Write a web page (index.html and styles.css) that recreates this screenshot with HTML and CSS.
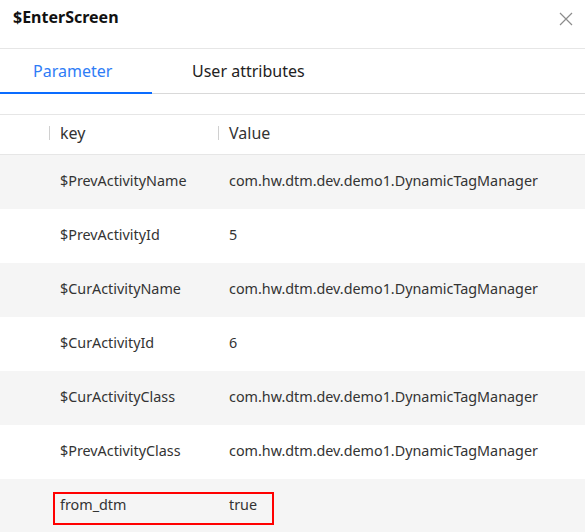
FILE: index.html
```html
<!DOCTYPE html>
<html>
<head>
<meta charset="utf-8">
<link rel="stylesheet" href="styles.css">
</head>
<body>
<div class="dialog">
  <div class="header">
    <span class="title">$EnterScreen</span>
    <svg class="close" width="14" height="14" viewBox="0 0 14 14"><path d="M1 1 L13 13 M13 1 L1 13" stroke="#8c8c8c" stroke-width="1.2" fill="none"/></svg>
  </div>
  <div class="tabs">
    <div class="tab active">Parameter</div>
    <div class="tab second">User attributes</div>
  </div>
  <div class="table">
    <div class="thead">
      <div class="cell key"><span class="sep"></span>key</div>
      <div class="cell val"><span class="sep"></span>Value</div>
    </div>
    <div class="row odd"><div class="cell key">$PrevActivityName</div><div class="cell val">com.hw.dtm.dev.demo1.DynamicTagManager</div></div>
    <div class="row"><div class="cell key">$PrevActivityId</div><div class="cell val">5</div></div>
    <div class="row odd"><div class="cell key">$CurActivityName</div><div class="cell val">com.hw.dtm.dev.demo1.DynamicTagManager</div></div>
    <div class="row"><div class="cell key">$CurActivityId</div><div class="cell val">6</div></div>
    <div class="row odd"><div class="cell key">$CurActivityClass</div><div class="cell val">com.hw.dtm.dev.demo1.DynamicTagManager</div></div>
    <div class="row"><div class="cell key">$PrevActivityClass</div><div class="cell val">com.hw.dtm.dev.demo1.DynamicTagManager</div></div>
    <div class="row odd last"><div class="cell key">from_dtm</div><div class="cell val">true</div><div class="highlight"></div></div>
  </div>
</div>
</body>
</html>
```

FILE: styles.css
```css
* { box-sizing: border-box; }
html, body { margin: 0; padding: 0; background: #fff; }
body {
  font-family: "Noto Sans", "Open Sans", sans-serif;
  color: #333;
  width: 587px;
  height: 532px;
  overflow: hidden;
}
.dialog { width: 585px; }
.header {
  height: 49px;
  border-bottom: 1px solid #e6e6e6;
  display: flex;
  align-items: flex-start;
  justify-content: space-between;
  padding: 5px 12px 0 13px;
}
.title {
  font-size: 16px;
  font-weight: bold;
  color: #111;
  line-height: 24px;
}
.close { margin-top: 7px; }
.tabs {
  height: 45px;
  display: flex;
  border-bottom: 1px solid #d9d9d9;
}
.tab {
  font-size: 16px;
  line-height: 44px;
  color: #222;
  height: 45px;
}
.tab.active {
  width: 152px;
  padding-left: 33px;
  color: #2e7cf6;
  border-bottom: 2px solid #0a6cff;
  margin-bottom: -1px;
}
.tab.second { padding-left: 40px; }
.table { margin-top: 20px; border-top: 1px solid #e6e6e6; }
.thead {
  height: 40px;
  display: flex;
  align-items: center;
  padding-bottom: 4px;
  border-bottom: 1px solid #e6e6e6;
  font-size: 16px;
  color: #333;
}
.row {
  height: 54px;
  display: flex;
  align-items: center;
  padding-bottom: 4px;
  font-size: 14.35px;
  position: relative;
}
.row.odd { background: #f5f5f5; }
.cell.key { width: 229px; padding-left: 60px; position: relative; }
.cell.val { flex: 1; position: relative; }
.sep {
  position: absolute;
  top: 4px;
  width: 1px;
  height: 14px;
  background: #d0d0d0;
}
.cell.key .sep { left: 49px; }
.cell.val .sep { left: -11px; }
.highlight {
  position: absolute;
  left: 53px;
  top: 13px;
  width: 221px;
  height: 33px;
  border: 2px solid #f00;
}
```
